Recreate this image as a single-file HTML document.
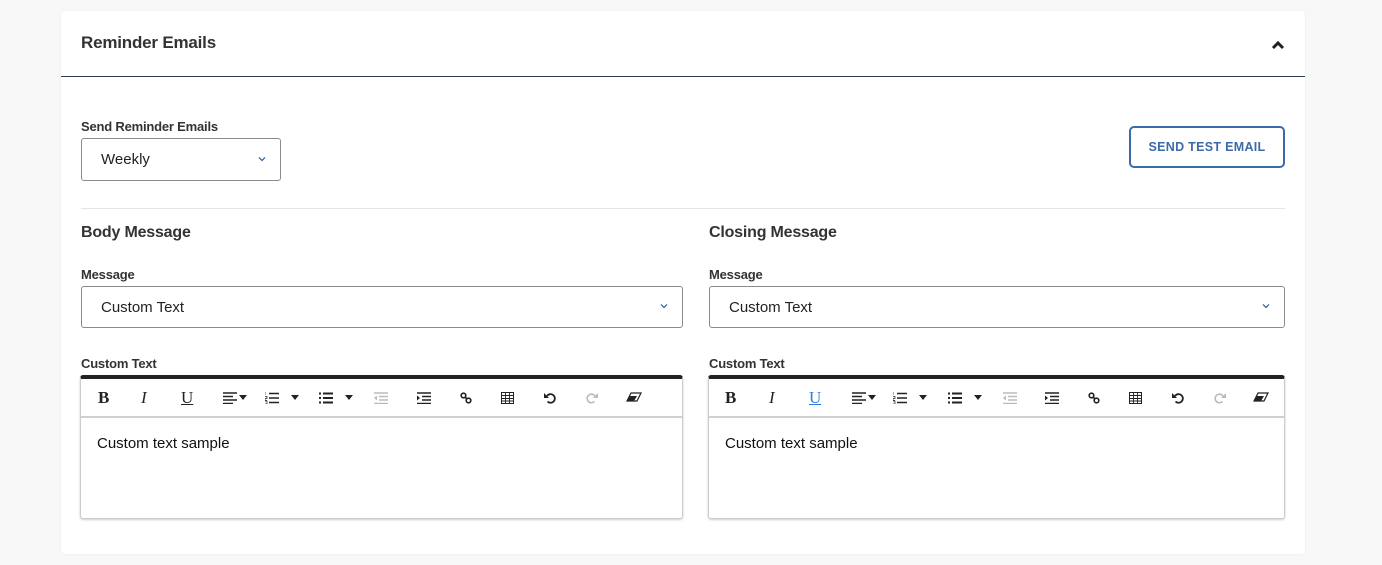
<!DOCTYPE html>
<html><head><style>
*{box-sizing:border-box;margin:0;padding:0}
body{width:1382px;height:565px;background:#f8f8f8;font-family:"Liberation Sans",sans-serif;color:#333;position:relative;overflow:hidden}
.card{position:absolute;left:61px;top:11px;width:1244px;height:543px;background:#fff;border-radius:4px;box-shadow:0 0 3px rgba(0,0,0,.06)}
.abs{position:absolute}
h1{position:absolute;left:20px;top:22px;font-size:17px;font-weight:bold;color:#333;letter-spacing:-.2px}
.hline{position:absolute;left:0;top:65px;width:1244px;height:1px;background:#2e3b55}
.lbl{font-size:13px;font-weight:bold;color:#333;letter-spacing:-.2px}
.sel{position:absolute;border:1px solid #8a8a8a;border-radius:3px;font-size:15px;color:#222;padding-left:19px;display:flex;align-items:center}
.sel .car{position:absolute;right:14px;top:50%;margin-top:-4px}
.h2{font-size:16px;font-weight:bold;color:#333;letter-spacing:-.2px}
.btn{position:absolute;left:1068px;top:115px;width:156px;height:42px;border:2px solid #3d6aa8;border-radius:5px;color:#3d6aa8;font-size:12.5px;font-weight:bold;display:flex;align-items:center;justify-content:center;letter-spacing:.3px}
.ed{position:absolute;border:1px solid #ccc;border-top:4px solid #222;border-radius:3px;box-shadow:0 1px 2px rgba(0,0,0,.2);background:#fff}
.tb{height:39px;border-bottom:2px solid #d0d0d0;position:relative}
.tb span{position:absolute;top:9px;font-size:17px;color:#222;font-family:"Liberation Serif",serif;font-weight:bold}
.tb svg{position:absolute;top:13px}
.txt{padding:17px 0 0 16px;font-size:15px;color:#111}
</style></head><body>
<div class="card">
<h1>Reminder Emails</h1>
<svg class="abs" style="left:1210px;top:29px" width="14" height="10" viewBox="0 0 14 10"><path d="M2 8 L7 3 L12 8" stroke="#222" stroke-width="3" fill="none"/></svg>
<div class="hline"></div>
<div class="abs lbl" style="left:20px;top:108px">Send Reminder Emails</div>
<div class="sel" style="left:20px;top:127px;width:200px;height:43px">Weekly<svg class="car" width="8" height="6" viewBox="0 0 8 6"><path d="M1 1.5 L4 4.5 L7 1.5" stroke="#3d6aa8" stroke-width="1.3" fill="none"/></svg></div>
<div class="btn">SEND TEST EMAIL</div>
<div class="abs" style="left:20px;top:197px;width:1204px;height:1px;background:#e5e5e5"></div>

<div class="abs h2" style="left:20px;top:213px">Body Message</div>
<div class="abs lbl" style="left:20px;top:256px">Message</div>
<div class="sel" style="left:20px;top:275px;width:602px;height:42px">Custom Text<svg class="car" width="8" height="6" viewBox="0 0 8 6"><path d="M1 1.5 L4 4.5 L7 1.5" stroke="#3d6aa8" stroke-width="1.3" fill="none"/></svg></div>
<div class="abs lbl" style="left:20px;top:345px">Custom Text</div>

<div class="abs h2" style="left:648px;top:213px">Closing Message</div>
<div class="abs lbl" style="left:648px;top:256px">Message</div>
<div class="sel" style="left:648px;top:275px;width:576px;height:42px">Custom Text<svg class="car" width="8" height="6" viewBox="0 0 8 6"><path d="M1 1.5 L4 4.5 L7 1.5" stroke="#3d6aa8" stroke-width="1.3" fill="none"/></svg></div>
<div class="abs lbl" style="left:648px;top:345px">Custom Text</div>
</div>

<div class="ed" style="left:80px;top:375px;width:603px;height:144px">
<div class="tb" id="t1"></div>
<div class="txt">Custom text sample</div>
</div>
<div class="ed" style="left:708px;top:375px;width:577px;height:144px">
<div class="tb" id="t2"></div>
<div class="txt">Custom text sample</div>
</div>
<script>
function tb(el,xs,ublue){
 var g='';
 var lines=function(x,c){return '<svg style="left:'+x+'px" width="14" height="12" viewBox="0 0 14 12"><path d="M0 1h14M0 4.5h10M0 8h14M0 11.5h10" stroke="'+c+'" stroke-width="1.6"/></svg>'};
 var tri=function(x){return '<svg style="left:'+x+'px;top:16px" width="8" height="5" viewBox="0 0 8 5"><path d="M0 0h8L4 5z" fill="#222"/></svg>'};
 g+='<span style="left:'+xs[0]+'px">B</span>';
 g+='<span style="left:'+xs[1]+'px;font-style:italic;font-weight:normal">I</span>';
 g+='<span style="left:'+xs[2]+'px;text-decoration:underline;font-weight:normal;color:'+(ublue?'#2a7de1':'#222')+'">U</span>';
 g+=lines(xs[3]-6,'#222')+tri(xs[3]+10);
 g+='<svg style="left:'+(xs[4]-7)+'px" width="14" height="12" viewBox="0 0 14 12"><path d="M4 1.5h10M4 6h10M4 10.5h10" stroke="#222" stroke-width="1.6"/><path d="M0 0v3M0 4.5h2v2H0v2h2M0 9h2v3H0" stroke="#222" stroke-width=".7" fill="none"/></svg>'+tri(xs[5]-4);
 g+='<svg style="left:'+(xs[6]-7)+'px" width="14" height="12" viewBox="0 0 14 12"><path d="M4 1.5h10M4 6h10M4 10.5h10M0 1.5h2M0 6h2M0 10.5h2" stroke="#222" stroke-width="2"/></svg>'+tri(xs[7]-4);
 g+='<svg style="left:'+(xs[8]-7)+'px" width="14" height="12" viewBox="0 0 14 12"><path d="M0 1h14M5 4.5h9M5 8h9M0 11.5h14" stroke="#bbb" stroke-width="1.5"/><path d="M3 3.5v5L0 6z" fill="#bbb"/></svg>';
 g+='<svg style="left:'+(xs[9]-7)+'px" width="14" height="12" viewBox="0 0 14 12"><path d="M0 1h14M5 4.5h9M5 8h9M0 11.5h14" stroke="#222" stroke-width="1.5"/><path d="M0 3.5v5L3 6z" fill="#222"/></svg>';
 g+='<svg style="left:'+(xs[10]-6)+'px" width="12" height="12" viewBox="0 0 12 12"><circle cx="3.5" cy="3.5" r="2.3" stroke="#222" stroke-width="1.6" fill="none"/><circle cx="8.5" cy="8.5" r="2.3" stroke="#222" stroke-width="1.6" fill="none"/><path d="M5 5l2 2" stroke="#222" stroke-width="1.6"/></svg>';
 g+='<svg style="left:'+(xs[11]-7)+'px" width="13" height="12" viewBox="0 0 13 12"><rect x=".5" y=".5" width="12" height="11" stroke="#222" fill="none"/><path d="M0 3.5h13M0 6.5h13M0 9h13M4.5 0v12M8.5 0v12" stroke="#222" stroke-width=".9"/></svg>';
 g+='<svg style="left:'+(xs[12]-6)+'px" width="12" height="12" viewBox="0 0 12 12"><path d="M3 4A4.3 4.3 0 1 1 3.5 9.5" stroke="#222" stroke-width="1.8" fill="none"/><path d="M0 1v5h5z" fill="#222"/></svg>';
 g+='<svg style="left:'+(xs[13]-6)+'px" width="12" height="12" viewBox="0 0 12 12"><path d="M9 4A4.3 4.3 0 1 0 8.5 9.5" stroke="#bbb" stroke-width="1.6" fill="none"/><path d="M12 1v5H7z" fill="#bbb"/></svg>';
 g+='<svg style="left:'+(xs[14]-8)+'px" width="16" height="10" viewBox="0 0 16 10"><path d="M5 1h10L11 9H1z" fill="none" stroke="#222" stroke-width="1.2"/><path d="M1 9l3-5h7l-3 5z" fill="#222"/></svg>';
 el.innerHTML=g;
}
tb(document.getElementById('t1'),[17,60,100,148,191,214,245,268,300,343,385,427,469,511,553],false);
tb(document.getElementById('t2'),[16,60,100,149,191,214,246,269,301,343,385,427,469,511,552],true);
</script>
</body></html>
